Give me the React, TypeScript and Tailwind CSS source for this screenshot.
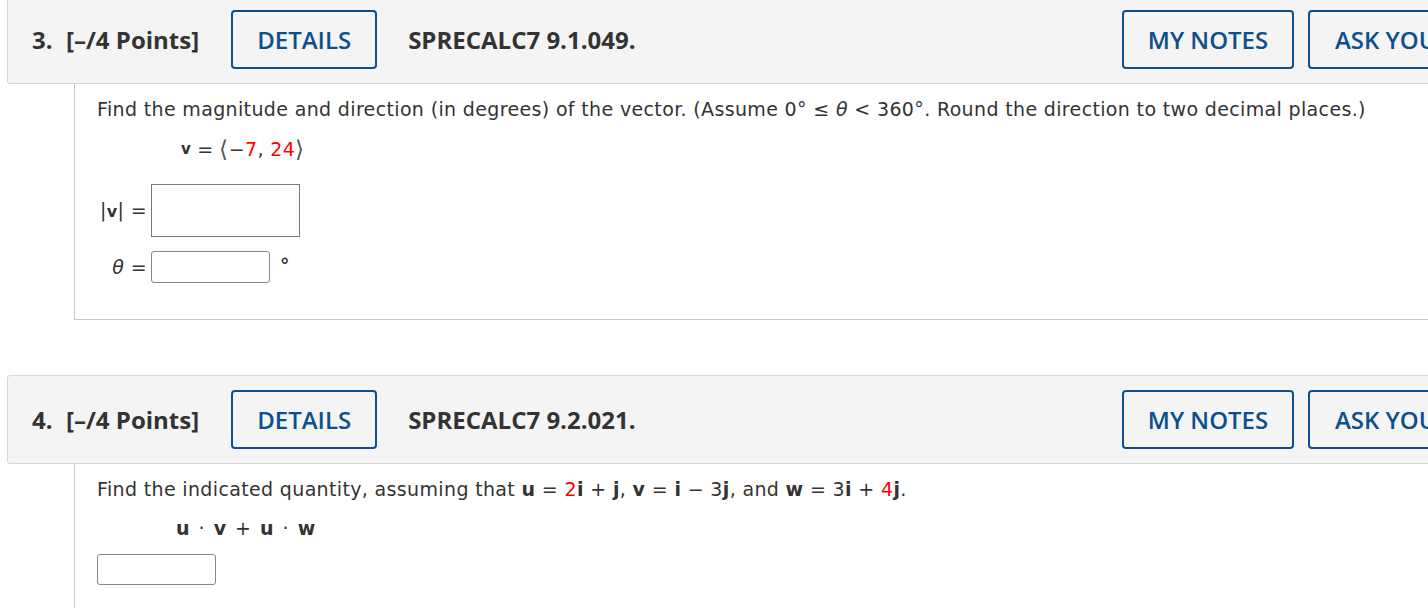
import React from "react";

const hdrFont = { fontFamily: '"Open Sans", "Liberation Sans", sans-serif' };
const bodyFont = { fontFamily: '"DejaVu Sans", Verdana, sans-serif', letterSpacing: "0.35px" };

function Header({ num, code }: { num: string; code: string }) {
  return (
    <div
      className="flex items-center h-[89px] border border-[#d6d6d6] bg-[#f4f4f4] rounded-[3px] pl-[24px] pr-[20px] text-[#333333]"
      style={hdrFont}
    >
      <span className="text-[24px] font-bold w-[34px]">{num}.</span>
      <span className="text-[24px] font-bold">[–/4 Points]</span>
      <button className="ml-[32px] w-[146px] h-[59px] border-2 border-[#0c4f8c] rounded-[4px] text-[#0c4f8c] text-[24px] font-semibold flex items-center justify-center">
        DETAILS
      </button>
      <span className="ml-[31px] text-[24px] font-bold">{code}</span>
      <div className="ml-auto flex gap-[14px]">
        <button className="w-[172px] h-[59px] border-2 border-[#0c4f8c] rounded-[4px] text-[#0c4f8c] text-[24px] font-semibold flex items-center justify-center">
          MY NOTES
        </button>
        <button className="w-[261px] h-[59px] border-2 border-[#0c4f8c] rounded-[4px] text-[#0c4f8c] text-[24px] font-semibold flex items-center justify-start pl-[25px] whitespace-nowrap overflow-hidden">
          ASK YOUR TEACHER
        </button>
      </div>
    </div>
  );
}

export default function App() {
  return (
    <div className="w-[1428px] h-[608px] overflow-hidden bg-white">
      <div className="w-[1590px] pl-[7px] -mt-[5px]">
        <Header num="3" code="SPRECALC7 9.1.049." />
        <div
          className="ml-[67px] border-l border-b border-[#c8c8c8] pl-[22px] pt-[12px] h-[236px] text-[#333333] text-[19px]"
          style={bodyFont}
        >
          <p className="leading-[26px]">
            Find the magnitude and direction (in degrees) of the vector. (Assume 0° ≤ <i>θ</i> &lt; 360°. Round the direction to two decimal places.)
          </p>
          <div className="mt-[14px] pl-[84px] leading-[26px] flex items-center">
            <b className="text-[15px]">v</b>
            <span className="mx-[6px]">=</span>
            <span className="text-[23px] font-light text-[#555]">⟨</span>
            <span>−</span>
            <span className="text-[#ff0000]">7</span>
            <span>,&nbsp;</span>
            <span className="text-[#ff0000]">24</span>
            <span className="text-[23px] font-light text-[#555]">⟩</span>
          </div>
          <div className="mt-[22px] flex items-center">
            <span className="w-[50px] text-right whitespace-nowrap">
              |<b className="text-[16px]">v</b>| =
            </span>
            <div className="ml-[4px] w-[149px] h-[53px] border border-[#7a7a7a] bg-white"></div>
          </div>
          <div className="mt-[14px] flex items-center">
            <span className="w-[50px] text-right whitespace-nowrap">
              <i>θ</i> =
            </span>
            <div className="ml-[4px] w-[119px] h-[32px] border border-[#888888] rounded-[3px] bg-white"></div>
            <span className="ml-[10px] -mt-[4px] text-[19px] font-bold">°</span>
          </div>
        </div>
        <div className="h-[55px]"></div>
        <Header num="4" code="SPRECALC7 9.2.021." />
        <div
          className="ml-[67px] border-l border-[#c8c8c8] pl-[22px] pt-[12px] h-[200px] text-[#333333] text-[19px]"
          style={bodyFont}
        >
          <p className="leading-[26px]">
            Find the indicated quantity, assuming that <b>u</b> = <span className="text-[#ff0000]">2</span>
            <b>i</b> + <b>j</b>, <b>v</b> = <b>i</b> − 3<b>j</b>, and <b>w</b> = 3<b>i</b> +{" "}
            <span className="text-[#ff0000]">4</span>
            <b>j</b>.
          </p>
          <div className="mt-[13px] pl-[79px] leading-[26px] tracking-[1.5px]">
            <b>u</b> · <b>v</b> + <b>u</b> · <b>w</b>
          </div>
          <div className="mt-[13px] w-[119px] h-[31px] border border-[#888888] rounded-[3px] bg-white"></div>
        </div>
      </div>
    </div>
  );
}
